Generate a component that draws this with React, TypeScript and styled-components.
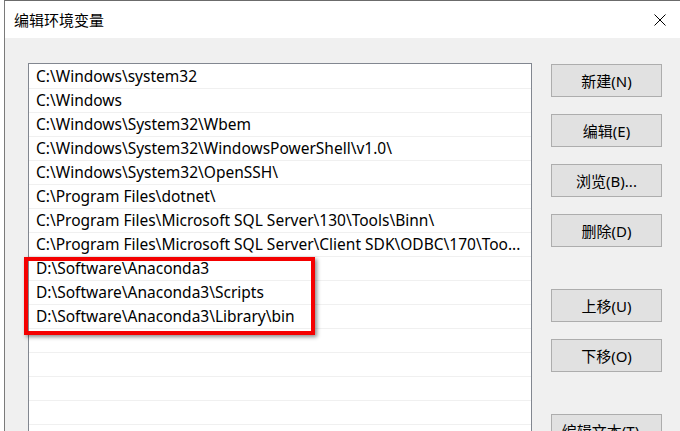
import React from 'react';
import styled, { createGlobalStyle } from 'styled-components';

const PATHS = [
  'C:\\Windows\\system32',
  'C:\\Windows',
  'C:\\Windows\\System32\\Wbem',
  'C:\\Windows\\System32\\WindowsPowerShell\\v1.0\\',
  'C:\\Windows\\System32\\OpenSSH\\',
  'C:\\Program Files\\dotnet\\',
  'C:\\Program Files\\Microsoft SQL Server\\130\\Tools\\Binn\\',
  'C:\\Program Files\\Microsoft SQL Server\\Client SDK\\ODBC\\170\\Too...',
  'D:\\Software\\Anaconda3',
  'D:\\Software\\Anaconda3\\Scripts',
  'D:\\Software\\Anaconda3\\Library\\bin',
  '',
  '',
  '',
  '',
  '',
];

const BUTTONS = [
  { label: '新建(N)', space: 0 },
  { label: '编辑(E)', space: 17 },
  { label: '浏览(B)...', space: 17 },
  { label: '删除(D)', space: 17 },
  { label: '上移(U)', space: 42 },
  { label: '下移(O)', space: 17 },
  { label: '编辑文本(T)...', space: 42 },
];

const GlobalStyle = createGlobalStyle`
  html, body {
    margin: 0;
    padding: 0;
    background: #fff;
    overflow: hidden;
  }
  body {
    font-family: 'Noto Sans', 'Noto Sans CJK SC', sans-serif;
    color: #000;
  }
`;

export default function App() {
  return (
    <>
      <GlobalStyle />
      <Window>
        <TitleBar>
          <Title>编辑环境变量</Title>
          <CloseButton aria-label="关闭">
            <svg width="12" height="12" viewBox="0 0 12 12">
              <path d="M0.5 0.5L11.5 11.5M11.5 0.5L0.5 11.5" stroke="#000" strokeWidth="1" fill="none" />
            </svg>
          </CloseButton>
        </TitleBar>
        <Body>
          <ListBox>
            {PATHS.map((path, idx) => (
              <Row key={idx}>{path}</Row>
            ))}
            <Highlight />
          </ListBox>
          <ButtonColumn>
            {BUTTONS.map((btn) => (
              <ActionButton key={btn.label} $space={btn.space}>
                {btn.label}
              </ActionButton>
            ))}
          </ButtonColumn>
        </Body>
      </Window>
    </>
  );
}

const Window = styled.div`
  margin-left: 4px;
  height: 100vh;
  border-left: 1px solid #7a7a7a;
  border-top: 1px solid #6b6b6b;
  display: flex;
  flex-direction: column;
  overflow: hidden;
`;

const TitleBar = styled.div`
  height: 37px;
  flex-shrink: 0;
  background: #fff;
  display: flex;
  align-items: center;
  justify-content: space-between;
  padding-left: 9px;
  padding-right: 14px;
`;

const Title = styled.span`
  font-size: 15px;
  line-height: 1;
  font-family: 'Noto Sans CJK SC', sans-serif;
`;

const CloseButton = styled.div`
  width: 12px;
  height: 12px;
  display: flex;
  margin-top: 1px;
`;

const Body = styled.div`
  flex: 1;
  background: #f0f0f0;
  display: flex;
  align-items: flex-start;
  gap: 19px;
  padding: 25px 0 0 23px;
`;

const ListBox = styled.div`
  position: relative;
  box-sizing: border-box;
  width: 504px;
  height: 420px;
  flex-shrink: 0;
  background: #fff;
  border: 1px solid #828790;
  padding-top: 1px;
`;

const Row = styled.div`
  box-sizing: border-box;
  height: 24px;
  line-height: 23px;
  padding: 0 4px 0 7px;
  border-bottom: 1px solid #f0f0f0;
  font-size: 15.5px;
  white-space: nowrap;
  overflow: hidden;
  text-overflow: ellipsis;
`;

const Highlight = styled.div`
  position: absolute;
  left: -5px;
  top: 193px;
  width: 291px;
  height: 78px;
  box-sizing: border-box;
  border: 4px solid #f40000;
  box-shadow: 2px 2px 4px rgba(0, 0, 0, 0.45);
  pointer-events: none;
`;

const ButtonColumn = styled.div`
  display: flex;
  flex-direction: column;
  padding-top: 1px;
`;

const ActionButton = styled.button<{ $space: number }>`
  box-sizing: border-box;
  width: 111px;
  height: 33px;
  margin-top: ${(p) => p.$space}px;
  background: #e1e1e1;
  border: 1px solid #adadad;
  border-radius: 0;
  padding: 0;
  font-family: 'Noto Sans', 'Noto Sans CJK SC', sans-serif;
  font-size: 15px;
  color: #000;
  white-space: nowrap;
  overflow: hidden;
`;
